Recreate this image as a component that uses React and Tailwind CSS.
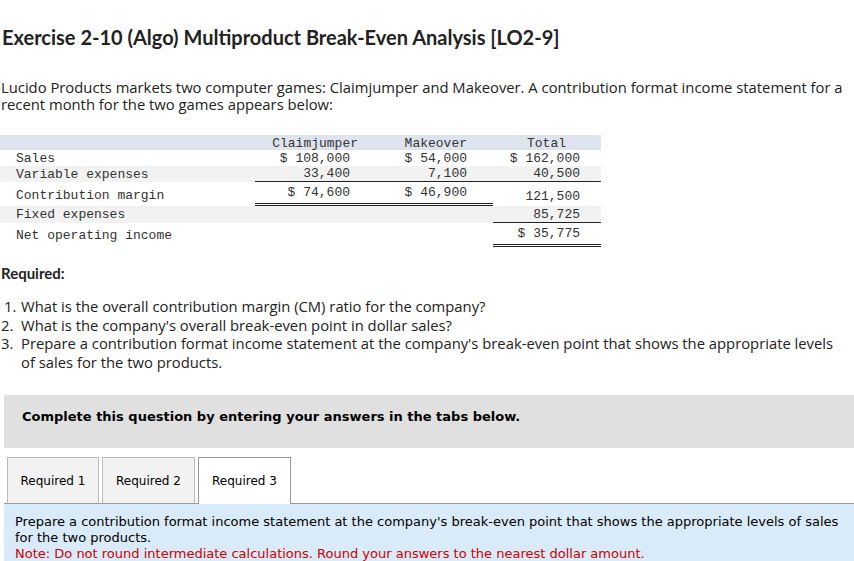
const ROWS = [
  { label: "Sales", c: "$ 108,000", m: "$ 54,000", t: "$ 162,000", shade: false },
  { label: "Variable expenses", c: "33,400", m: "7,100", t: "40,500", shade: true, line: true },
];

function Statement() {
  return (
    <div className="w-[601px] mt-[22px] font-['Liberation_Mono',monospace] text-[13px] text-[#333] leading-none">
      <div className="flex h-[15px] items-end bg-[#dfe3ee]">
        <div className="w-[255px]" />
        <div className="w-[107px] text-right pr-1">Claimjumper</div>
        <div className="w-[131px] text-right pr-[26px]">Makeover</div>
        <div className="w-[108px] text-right pr-[35px]">Total</div>
      </div>
      {ROWS.map((r) => (
        <div key={r.label} className={`flex h-4 items-center ${r.shade ? "bg-[#f2f2f2]" : ""}`}>
          <div className="w-[255px] pl-4">{r.label}</div>
          <div className={`w-[107px] h-full flex items-center justify-end pr-[12px] ${r.line ? "border-b border-[#222]" : ""}`}>{r.c}</div>
          <div className={`w-[131px] h-full flex items-center justify-end pr-[26px] ${r.line ? "border-b border-[#222]" : ""}`}>{r.m}</div>
          <div className={`w-[108px] h-full flex items-center justify-end pr-[21px] ${r.line ? "border-b border-[#222]" : ""}`}>{r.t}</div>
        </div>
      ))}
      <div className="flex h-[24px]">
        <div className="w-[255px] pl-4 flex items-center pt-[2px]">Contribution margin</div>
        <div className="w-[238px] flex border-b-[3px] border-double border-[#222]">
          <div className="w-[107px] flex items-center justify-end pr-[12px]">$ 74,600</div>
          <div className="w-[131px] flex items-center justify-end pr-[26px]">$ 46,900</div>
        </div>
        <div className="w-[108px] flex items-center justify-end pr-[21px] pt-[4px]">121,500</div>
      </div>
      <div className="flex h-[17px] bg-[#f2f2f2]">
        <div className="w-[493px] pl-4 flex items-center">Fixed expenses</div>
        <div className="w-[108px] flex items-center justify-end pr-[21px] border-b border-[#222]">85,725</div>
      </div>
      <div className="flex h-[24px]">
        <div className="w-[493px] pl-4 flex items-center">Net operating income</div>
        <div className="w-[108px] flex items-center justify-end pr-[21px] border-b-[3px] border-double border-[#222]">$ 35,775</div>
      </div>
    </div>
  );
}

export default function App() {
  return (
    <div className="w-[854px] h-[561px] overflow-hidden bg-white font-['Lato',sans-serif] text-[#222]">
      <h1 className="pl-[2px] pt-[25px] text-[20px] font-bold leading-6">
        Exercise 2-10 (Algo) Multiproduct Break-Even Analysis [LO2-9]
      </h1>
      <p className="pl-[1px] pt-[30px] font-['Open_Sans',sans-serif] text-[14.8px] leading-[17px]">
        Lucido Products markets two computer games: Claimjumper and Makeover. A contribution format income statement for a
        recent month for the two games appears below:
      </p>

      <Statement />

      <p className="pl-[1px] mt-[17px] text-[15px] font-bold leading-[18px]">Required:</p>
      <ol className="mt-[15px] pr-[12px] font-['Open_Sans',sans-serif] text-[14.8px] leading-[18.5px]">
        <li className="flex"><span className="w-[21px] shrink-0 pl-[4px]">1.</span><span>What is the overall contribution margin (CM) ratio for the company?</span></li>
        <li className="flex"><span className="w-[21px] shrink-0 pl-[1px]">2.</span><span>What is the company's overall break-even point in dollar sales?</span></li>
        <li className="flex"><span className="w-[21px] shrink-0 pl-[1px]">3.</span><span>Prepare a contribution format income statement at the company's break-even point that shows the appropriate levels of sales for the two products.</span></li>
      </ol>

      <div className="ml-[4px] mt-[24px] h-[53px] bg-[#e0e0e0] flex items-center pl-[18px] pb-[10px] font-['DejaVu_Sans',sans-serif] text-[13px] font-bold text-black">
        Complete this question by entering your answers in the tabs below.
      </div>

      <div className="ml-[4px] mt-[9px] font-['DejaVu_Sans',sans-serif] text-[12px] text-black">
        <div className="flex items-end">
          <div className="w-[3px] h-px bg-[#999]" />
          <div className="w-[92px] h-[47px] flex items-center justify-center bg-[#f2f2f2] border border-[#bbb] border-b-[#999]">Required 1</div>
          <div className="w-[3px] h-px bg-[#999]" />
          <div className="w-[93px] h-[47px] flex items-center justify-center bg-[#f2f2f2] border border-[#bbb] border-b-[#999]">Required 2</div>
          <div className="w-[3px] h-px bg-[#999]" />
          <div className="w-[93px] h-[47px] flex items-center justify-center bg-white border border-[#999] border-b-0">Required 3</div>
          <div className="flex-1 h-px bg-[#999]" />
        </div>
        <div className="bg-[#d9ebf9] h-[60px] pl-[11px] pr-2 pt-[10px] text-[13px] leading-4">
          <p>Prepare a contribution format income statement at the company's break-even point that shows the appropriate levels of sales for the two products.</p>
          <p className="text-[#c00]">Note: Do not round intermediate calculations. Round your answers to the nearest dollar amount.</p>
        </div>
      </div>
    </div>
  );
}
